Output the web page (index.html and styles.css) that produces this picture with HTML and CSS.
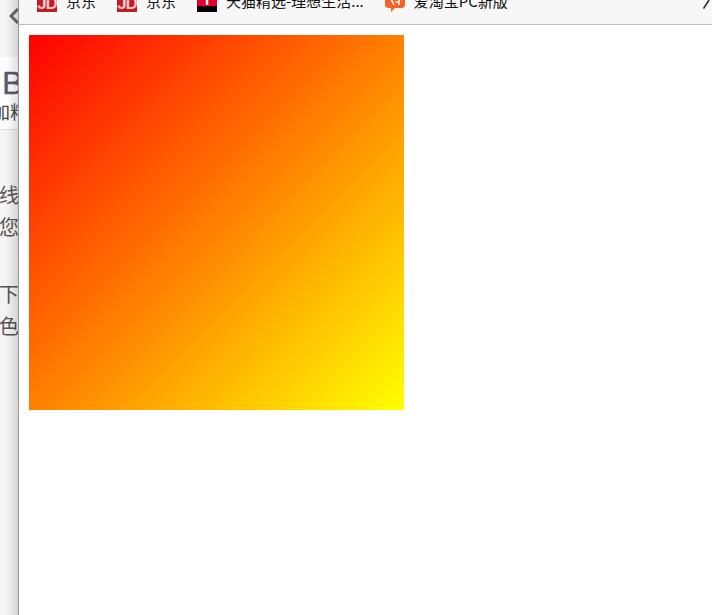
FILE: index.html
```html
<!DOCTYPE html>
<html lang="zh-CN">
<head>
<meta charset="utf-8">
<title>渐变</title>
<link rel="stylesheet" href="styles.css">
</head>
<body>
<aside class="behind">
  <svg class="back" width="10" height="18" viewBox="0 0 10 18"><path d="M9 2 L2 9 L9 16" fill="none" stroke="#666" stroke-width="3"/></svg>
  <div class="card">
    <div class="card-title">B</div>
    <div class="card-sub">加料</div>
  </div>
  <div class="para">
    <p>线</p>
    <p>您</p>
  </div>
  <div class="para">
    <p>下</p>
    <p>色</p>
  </div>
</aside>
<main class="window">
  <nav class="bookmarks">
    <a class="mark"><span class="icon jd">JD</span><span class="label">京东</span></a>
    <a class="mark"><span class="icon jd">JD</span><span class="label">京东</span></a>
    <a class="mark"><span class="icon tmall">T</span><span class="label">天猫精选-理想生活...</span></a>
    <a class="mark"><svg class="icon-svg" width="20" height="20" viewBox="0 0 20 20"><path d="M2 0 H18 Q20 0 20 2 V13 Q20 16 16 16 H10 L6 20 V16 H4 Q0 16 0 13 V2 Q0 0 2 0 Z" fill="#f4622a"/><path d="M6 7 L9 13 M9 7 H14 V13 M10.500 10 H13" fill="none" stroke="#fff" stroke-width="1.500"/></svg><span class="label">爱淘宝PC新版</span></a>
    <svg class="more" width="9" height="9" viewBox="0 0 9 9"><path d="M0.500 8.500 L6 0" fill="none" stroke="#222" stroke-width="1.500"/></svg>
  </nav>
  <div class="content">
    <div class="gradient-box"></div>
  </div>
</main>
</body>
</html>
```
FILE: styles.css
```css
html, body {
  margin: 0;
  height: 100%;
  overflow: hidden;
  background: #fff;
}
body {
  display: flex;
  font-family: "Noto Sans CJK SC", "Liberation Sans", sans-serif;
}
.behind {
  position: relative;
  flex: 0 0 19px;
  width: 19px;
  overflow: hidden;
  background: #f4f4f4;
  border-right: 1px solid #999;
  box-sizing: border-box;
  color: #555;
}
.behind::after {
  content: "";
  position: absolute;
  inset: 0;
  background: linear-gradient(to right, rgba(0,0,0,0) 35%, rgba(0,0,0,.13) 100%);
}
.back {
  display: block;
  margin: 7px 0 0 9px;
}
.card {
  width: 60px;
  height: 73px;
  margin: 32px 0 0 -8px;
  padding-top: 9px;
  box-sizing: border-box;
  background: #fff;
  border-bottom: 1px solid #ddd;
}
.card-title {
  font-family: "Liberation Sans", sans-serif;
  font-size: 32px;
  line-height: 34px;
  color: #5a5a6e;
  -webkit-text-stroke: 0.3px #5a5a6e;
  padding-left: 10px;
}
.card-sub {
  font-size: 18px;
  line-height: 22px;
  color: #444;
}
.para {
  margin-top: 49px;
  font-size: 20px;
  line-height: 32px;
  width: 40px;
  margin-left: -1px;
}
.para + .para {
  margin-top: 35px;
}
.para p {
  margin: 0;
}
.window {
  flex: 1;
  min-width: 0;
  display: flex;
  flex-direction: column;
}
.bookmarks {
  flex: 0 0 25px;
  box-sizing: border-box;
  height: 25px;
  display: flex;
  align-items: flex-end;
  gap: 21px;
  padding: 0 0 12px 18px;
  background: #f7f7f7;
  border-bottom: 1px solid #bbb;
  overflow: hidden;
  font-size: 15px;
  line-height: 20px;
  color: #111;
  white-space: nowrap;
}
.mark {
  display: flex;
  align-items: flex-end;
  gap: 9px;
}
.label {
  margin-bottom: 1px;
}
.icon {
  display: block;
  flex: none;
  width: 20px;
  height: 20px;
  text-align: center;
  font-family: "Liberation Sans", sans-serif;
  font-weight: 700;
}
.jd {
  background: #c41a20;
  color: #f3c9c9;
  font-size: 17px;
  line-height: 24px;
  letter-spacing: -1px;
}
.tmall {
  background: linear-gradient(#e6002d 0 14px, #000 14px);
  color: #fff;
  font-size: 15px;
  line-height: 15px;
}
.icon-svg {
  display: block;
  flex: none;
}
.more {
  position: absolute;
  right: 0;
  top: 0;
}
.content {
  flex: 1;
  padding: 10px;
  background: #fff;
}
.gradient-box {
  width: 375px;
  height: 375px;
  background: linear-gradient(to bottom right, #f00, #ff0);
}
```
